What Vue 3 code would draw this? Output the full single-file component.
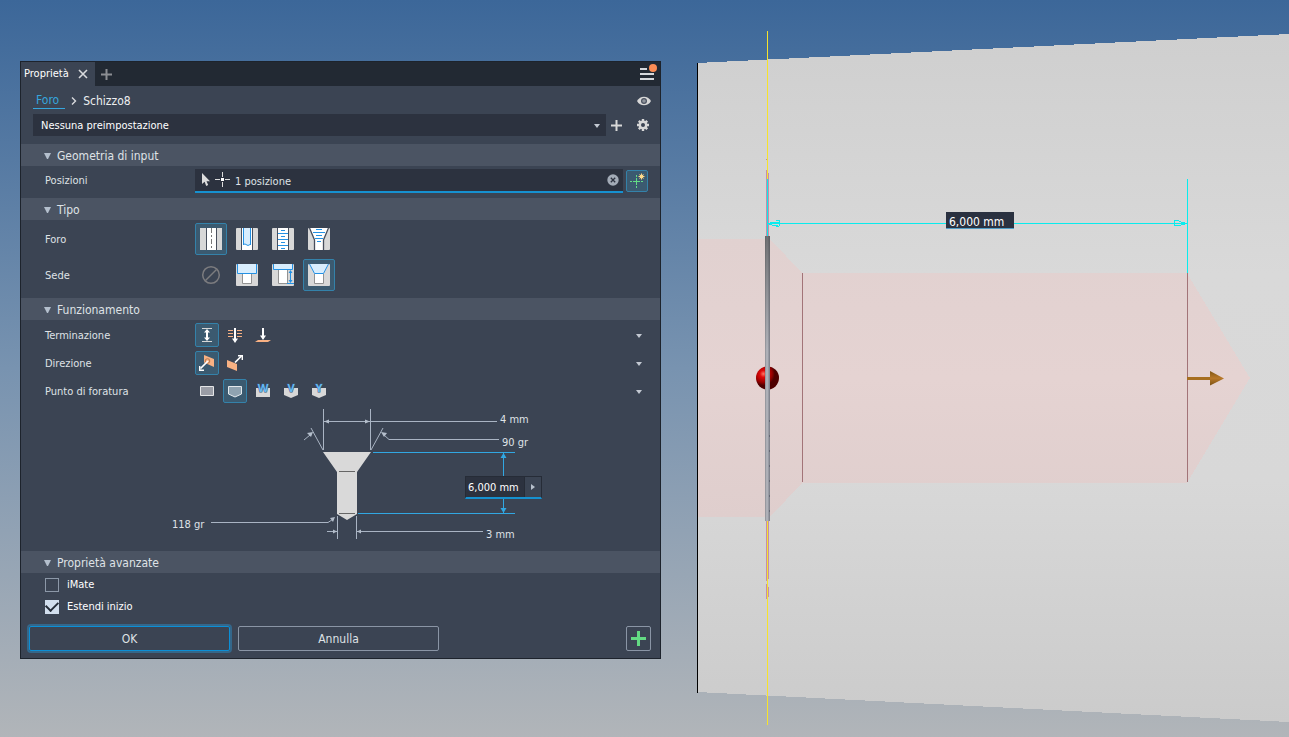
<script setup>
import { ref } from 'vue'

const holeTypes = ['simple', 'clearance', 'tapped', 'taper']
const seatTypes = ['none', 'counterbore', 'spotface', 'countersink']
const terminations = ['distance', 'through', 'to']
const directions = ['default', 'flipped']
const points = ['flat', 'angle', 'w', 'v', 'y']

const hole = ref('simple')
const seat = ref('countersink')
const termination = ref('distance')
const direction = ref('default')
const point = ref('angle')
const depth = ref('6,000 mm')
const positions = ref('1 posizione')
const imate = ref(false)
const extend = ref(true)
</script>

<template>
  <main class="page">
    <section class="panel">
      <header class="tabs">
        <div class="tab">
          <span>Proprietà</span>
          <button class="bare" aria-label="Chiudi">
            <svg width="10" height="10" viewBox="0 0 10 10"><path d="M1 1l8 8M9 1l-8 8" stroke="#d8dadd" stroke-width="1.600" /></svg>
          </button>
        </div>
        <button class="bare add-tab" aria-label="Aggiungi scheda">
          <svg width="11" height="11" viewBox="0 0 11 11"><path d="M5.500 0v11M0 5.500h11" stroke="#8b8e93" stroke-width="2" /></svg>
        </button>
        <button class="bare menu" aria-label="Menu">
          <svg width="18" height="18" viewBox="0 0 18 18">
            <path d="M1 5h7M1 10h14M1 15h14" stroke="#d5d8dc" stroke-width="2" />
            <circle cx="14" cy="4" r="4" fill="#fb8c55" />
          </svg>
        </button>
      </header>

      <nav class="crumbs">
        <a href="#foro">Foro</a>
        <svg width="6" height="8" viewBox="0 0 6 8"><path d="M1 .5l3.500 3.500L1 7.500" fill="none" stroke="#d8dadd" stroke-width="1.400" /></svg>
        <span>Schizzo8</span>
        <button class="bare eye" aria-label="Anteprima">
          <svg width="14" height="10" viewBox="0 0 14 10">
            <path d="M0 5C3 -.8 11 -.8 14 5 11 10.800 3 10.800 0 5z" fill="#d8d8d8" />
            <circle cx="7" cy="5" r="3" fill="#4b5260" /><circle cx="7" cy="5" r="1.800" fill="#8f949c" />
          </svg>
        </button>
      </nav>

      <div class="preset">
        <div class="select">
          <select aria-label="Preimpostazione"><option>Nessuna preimpostazione</option></select>
          <svg class="caret" width="6" height="4" viewBox="0 0 6 4"><path d="M0 0h6L3 4z" fill="#c3c9d2" /></svg>
        </div>
        <button class="bare" aria-label="Nuova preimpostazione">
          <svg width="11" height="11" viewBox="0 0 11 11"><path d="M5.500 0v11M0 5.500h11" stroke="#d8d8d8" stroke-width="2" /></svg>
        </button>
        <button class="bare gear" aria-label="Impostazioni">
          <svg width="12" height="12" viewBox="0 0 12 12">
            <path d="M6 0v12M0 6h12M1.800 1.800l8.400 8.400M10.200 1.800l-8.400 8.400" stroke="#d8d8d8" stroke-width="2.400" />
            <circle cx="6" cy="6" r="4.400" fill="#d8d8d8" /><circle cx="6" cy="6" r="2" fill="#3b4453" />
          </svg>
        </button>
      </div>

      <h2><i></i>Geometria di input</h2>
      <div class="row positions">
        <label for="positions">Posizioni</label>
        <div class="field">
          <svg width="32" height="16" viewBox="0 0 32 16">
            <path d="M3 1v11l2.600-2.300L7.200 14l2-1-1.700-3.700H11z" fill="#dcdcdc" />
            <path d="M16 7.500h5m5 0h5M23.500 0v5m0 5v5" stroke="#dcdcdc" shape-rendering="crispEdges" />
            <path d="M22 6h3v3h-3z" fill="#fff" />
          </svg>
          <input id="positions" v-model="positions" />
          <button class="bare" aria-label="Cancella selezione">
            <svg width="12" height="12" viewBox="0 0 12 12"><circle cx="6" cy="6" r="5.700" fill="#a3abb7" /><path d="M3.800 3.800l4.400 4.400M8.200 3.800L3.800 8.200" stroke="#2c323f" stroke-width="1.300" /></svg>
          </button>
        </div>
        <button class="tool small on sketch" aria-label="Centro schizzo">
          <svg width="18" height="18" viewBox="0 0 18 18">
            <path d="M2 9.500h2m1 0h7m1 0h2M8.500 3v2m0 1v7m0 1v2" stroke="#63dd86" shape-rendering="crispEdges" />
            <path d="M13.500 1.500v6M10.500 4.500h6M11.500 2.500l4 4M15.500 2.500l-4 4" stroke="#ffd27a" /><circle cx="13.500" cy="4.500" r="2" fill="#ffdc8d" />
          </svg>
        </button>
      </div>

      <h2><i></i>Tipo</h2>
      <div class="row big">
        <span>Foro</span>
        <div class="tools wide" role="group" aria-label="Foro">
          <button v-for="t in holeTypes" :key="t" class="tool" :class="{ on: hole === t }" :aria-label="t" @click="hole = t">
            <svg width="22" height="22" viewBox="0 0 22 22">
              <template v-if="t === 'simple'">
                <rect width="22" height="22" fill="#d8d8d8" /><path d="M6 0h10v22H6z" fill="#fff" />
                <path d="M6.500 0v22M16.500 0v22" stroke="#474e5c" /><path d="M11.500 0v22" stroke="#777" stroke-dasharray="5 2 2 2" />
              </template>
              <template v-else-if="t === 'clearance'">
                <rect width="22" height="22" rx="1" fill="#d8d8d8" /><path d="M6 0h10v22H6z" fill="#fff" />
                <path d="M5.500 0v22M16.500 0v22" stroke="#474e5c" />
                <path d="M7.500 0v17l2-1 2 1 2-.5 1.500.5V0" fill="#d8edfd" /><path d="M7.500 0v17M7 16.500l2-.5 3 1.500 2-1M14.500 0v17" fill="none" stroke="#2491e4" />
              </template>
              <template v-else-if="t === 'tapped'">
                <rect width="22" height="22" rx="1" fill="#d8d8d8" /><path d="M6 0h10v22H6z" fill="#fff" />
                <path d="M5.500 0v22M16.500 0v22" stroke="#474e5c" />
                <path d="M9 2.500h4M6 5.500h10M9 8.500h4M6 11.500h10M9 14.500h4M6 17.500h10M9 20.500h4" stroke="#2491e4" />
              </template>
              <template v-else>
                <rect width="22" height="22" rx="1" fill="#d8d8d8" /><path d="M1 0h20l-5 12v10H6V12z" fill="#fff" />
                <path d="M1.500 0L6.500 12v10M20.500 0l-5 12v10" fill="none" stroke="#474e5c" stroke-width="1.300" />
                <path d="M8 1.500h6M5 4.500h12M8 7.500h6M7 10.500h8M9 13.500h4" stroke="#2491e4" />
              </template>
            </svg>
          </button>
        </div>
      </div>
      <div class="row big seat">
        <span>Sede</span>
        <div class="tools wide" role="group" aria-label="Sede">
          <button v-for="t in seatTypes" :key="t" class="tool" :class="{ on: seat === t }" :aria-label="t" @click="seat = t">
            <svg width="22" height="22" viewBox="0 0 22 22">
              <template v-if="t === 'none'">
                <circle cx="11" cy="11" r="8.300" fill="none" stroke="#7c7c7f" stroke-width="1.500" /><path d="M5.500 16.500l11-11" stroke="#7c7c7f" stroke-width="1.500" />
              </template>
              <template v-else-if="t === 'counterbore'">
                <rect width="22" height="22" rx="1" fill="#d8d8d8" /><path d="M1.500 -1v10.500h19V-1" fill="#d8edfd" stroke="#2491e4" />
                <path d="M6.500 10v9.500h9V10" fill="#fff" stroke="#929292" />
              </template>
              <template v-else-if="t === 'spotface'">
                <rect width="22" height="22" rx="1" fill="#d8d8d8" /><path d="M1.500 -1v6.500h19V-1" fill="#d8edfd" stroke="#2491e4" />
                <path d="M6.500 6v13.500h9V6" fill="#fff" stroke="#929292" /><path d="M15 19.500h7M18.500 8v10" stroke="#2491e4" />
                <path d="M16.500 9l2-3 2 3zM16.500 16l2 3 2-3z" fill="#2491e4" />
              </template>
              <template v-else>
                <rect width="22" height="22" rx="1" fill="#d8d8d8" /><path d="M1 -1l5.500 10.500h9L21 -1" fill="#d8edfd" stroke="#2491e4" />
                <path d="M6.500 10v9.500h9V10" fill="#fff" stroke="#929292" />
              </template>
            </svg>
          </button>
        </div>
      </div>

      <h2><i></i>Funzionamento</h2>
      <div class="row">
        <span>Terminazione</span>
        <div class="tools" role="group" aria-label="Terminazione">
          <button v-for="t in terminations" :key="t" class="tool small" :class="{ on: termination === t }" :aria-label="t" @click="termination = t">
            <svg width="16" height="16" viewBox="0 0 16 16">
              <template v-if="t === 'distance'">
                <path d="M3 1.500h10M3 14.500h10" stroke="#d8d8d8" /><path d="M8 3v10" stroke="#fff" stroke-width="2" />
                <path d="M5 5.500L8 2l3 3.500zM5 10.500L8 14l3-3.500z" fill="#fff" />
              </template>
              <template v-else-if="t === 'through'">
                <path d="M1 3.500h5M1 6.500h5M1 9.500h5M10 3.500h5M10 6.500h5M10 9.500h5" stroke="#f8b183" />
                <path d="M8 1v12" stroke="#fff" stroke-width="2" /><path d="M5 11.500h6L8 16z" fill="#fff" />
              </template>
              <template v-else>
                <path d="M3 13h13l-3 2H0z" fill="#f8b183" /><path d="M8 1v9" stroke="#fff" stroke-width="2" /><path d="M5 8.500h6L8 13z" fill="#fff" />
              </template>
            </svg>
          </button>
        </div>
        <button class="bare more" aria-label="Altre opzioni di terminazione"><svg width="6" height="4" viewBox="0 0 6 4"><path d="M0 0h6L3 4z" fill="#c3c9d2" /></svg></button>
      </div>
      <div class="row">
        <span>Direzione</span>
        <div class="tools" role="group" aria-label="Direzione">
          <button v-for="t in directions" :key="t" class="tool small" :class="{ on: direction === t }" :aria-label="t" @click="direction = t">
            <svg width="16" height="16" viewBox="0 0 16 16">
              <template v-if="t === 'default'">
                <path d="M5 0l10 4v8L5 7.500z" fill="#f8b183" /><circle cx="8.500" cy="6" r="2.300" fill="none" stroke="#b7794f" />
                <path d="M9 6l-7.500 7.500" stroke="#fff" stroke-width="1.700" /><path d="M.7 11v4.300h4.300" fill="none" stroke="#fff" stroke-width="1.400" />
              </template>
              <template v-else>
                <path d="M0 5l10 4v7L0 12z" fill="#f8b183" /><path d="M8 7.500L14.500 1" stroke="#fff" stroke-width="1.700" /><path d="M11 .7h4.300V5" fill="none" stroke="#fff" stroke-width="1.400" />
              </template>
            </svg>
          </button>
        </div>
        <button class="bare more" aria-label="Altre opzioni di direzione"><svg width="6" height="4" viewBox="0 0 6 4"><path d="M0 0h6L3 4z" fill="#c3c9d2" /></svg></button>
      </div>
      <div class="row">
        <span>Punto di foratura</span>
        <div class="tools" role="group" aria-label="Punto di foratura">
          <button v-for="t in points" :key="t" class="tool small" :class="{ on: point === t }" :aria-label="t" @click="point = t">
            <svg width="16" height="20" viewBox="0 -2 16 20">
              <path v-if="t === 'flat'" d="M1.500 3.500v9h13v-9z" fill="#9a9da6" stroke="#e4e5e7" />
              <path v-else-if="t === 'angle'" d="M1.500 3.500v7.500L8 14l6.500-3V3.500z" fill="#8fa3b1" stroke="#e4e9ed" />
              <template v-else>
                <path :d="t === 'w' ? 'M1 5h14v9H1z' : 'M1 5h14v7l-7 3-7-3z'" fill="#d8d8d8" />
                <text x="8" y="9" text-anchor="middle" class="letter">{{ t.toUpperCase() }}</text>
              </template>
            </svg>
          </button>
        </div>
        <button class="bare more" aria-label="Altre opzioni della punta"><svg width="6" height="4" viewBox="0 0 6 4"><path d="M0 0h6L3 4z" fill="#c3c9d2" /></svg></button>
      </div>

      <div class="diagram">
        <svg width="400" height="147" viewBox="0 4 400 147">
          <g stroke="#a9b4c3" fill="none">
            <path d="M163.500 9v41M210.500 9v41M164 21.500h173M151 28l12 22M223 28l-12 22" />
            <path d="M144 40l6-5M224 35l5 4.500h110M51 122.500h117l6-4M177.500 116v23M196.500 116v23M167 131.500h10M197 131.500h126" />
          </g>
          <path d="M164 21.500l5-2v4zM210 21.500l-5-2v4zM153 32l-2 5-4-4zM221 32l6 1-3 4zM175 117l-2 5-3-4zM177 131.500l-4-2v4zM197 131.500l4-2v4z" fill="#b4becb" />
          <path d="M163 52h48l-14 20v42l-10 6-10-6V72z" fill="#d9d9d9" />
          <path d="M179 71.500h16M179 113.500h16" stroke="#666" />
          <path d="M213 52.500h142M198 113.500h157M343.500 53v60" stroke="#31a7e2" />
          <path d="M343.500 53l-3 5h6zM343.500 113l-3-5h6z" fill="#31a7e2" />
          <g class="label"><text x="340" y="23">4 mm</text><text x="342" y="46">90 gr</text><text x="12" y="128">118 gr</text><text x="326" y="138">3 mm</text></g>
        </svg>
        <div class="depth">
          <input v-model="depth" aria-label="Profondità foro" />
          <button class="bare" aria-label="Opzioni valore"><svg width="4" height="6" viewBox="0 0 4 6"><path d="M0 0v6l4-3z" fill="#b7c0cc" /></svg></button>
        </div>
      </div>

      <h2><i></i>Proprietà avanzate</h2>
      <div class="checks">
        <label><input v-model="imate" type="checkbox" />iMate</label>
        <label><input v-model="extend" type="checkbox" />Estendi inizio</label>
      </div>

      <footer>
        <button class="action primary">OK</button>
        <button class="action">Annulla</button>
        <button class="action apply" aria-label="Applica e crea nuovo foro">
          <svg width="15" height="15" viewBox="0 0 15 15"><path d="M7.500 0v15M0 7.500h15" stroke="#63da83" stroke-width="3" /></svg>
        </button>
      </footer>
    </section>

    <svg class="scene" viewBox="697 0 592 737" preserveAspectRatio="xMinYMin slice" role="img" aria-label="Anteprima del foro">
      <defs>
        <linearGradient id="metal" x2="0" y2="1"><stop offset="0" stop-color="#cfcfcf" /><stop offset=".35" stop-color="#d9d9d9" /><stop offset=".65" stop-color="#d8d8d8" /><stop offset="1" stop-color="#cbcbcb" /></linearGradient>
        <linearGradient id="cut" x2="0" y2="1"><stop offset="0" stop-color="#e1d1d0" /><stop offset=".5" stop-color="#e5d3d2" /><stop offset="1" stop-color="#dfcecd" /></linearGradient>
        <linearGradient id="rod" x2="1" y2="0"><stop offset="0" stop-color="#8c8d93" /><stop offset=".4" stop-color="#b9bbc2" /><stop offset="1" stop-color="#777a84" /></linearGradient>
        <linearGradient id="rodShade" x2="0" y2="1"><stop offset="0" stop-color="#444" stop-opacity=".6" /><stop offset=".4" stop-color="#555" stop-opacity="0" /></linearGradient>
        <radialGradient id="ball" cx=".32" cy=".32"><stop offset="0" stop-color="#ff7565" /><stop offset=".3" stop-color="#df0909" /><stop offset=".75" stop-color="#970000" /><stop offset="1" stop-color="#4e0000" /></radialGradient>
        <linearGradient id="gold" x2="0" y2="1"><stop offset="0" stop-color="#805716" /><stop offset=".5" stop-color="#b8792a" /><stop offset="1" stop-color="#7c5213" /></linearGradient>
      </defs>
      <g shape-rendering="crispEdges">
        <path d="M697 63L1289 34V722L697 692z" fill="url(#metal)" />
        <path d="M697.500 63v630" stroke="#000" />
        <path d="M698 239h72l32 34h385l63 105-63 105H802l-32 34h-72z" fill="url(#cut)" />
        <path d="M802.500 273v209M1187.500 273v209" stroke="#a27478" />
        <path d="M766.500 170v66M768.500 173v63M766.500 521v60M768.500 521v58M766.500 584v15M768.500 587v10" stroke="#c48fa9" />
        <path d="M766.500 159v1" stroke="#b98f9f" />
        <path d="M767.500 31v148M767.500 520v205" stroke="#f7e32b" />
        <path d="M767.500 179v58M767.500 223.500h420M1187.500 179v94" stroke="#08ecee" />
        <path d="M779.500 221v5M776 220.500h4M776 226.500h3M768 223.500l5-1h6M768 223.500l5 2h5M1174.500 220v6M1175 220.500h4M1175 225.500h4M1187 223.500l-8-2M1187 223.500l-8 2" stroke="#08ecee" fill="none" />
      </g>
      <circle cx="767.500" cy="378" r="11.500" fill="url(#ball)" />
      <rect x="765" y="236" width="5" height="285" fill="url(#rod)" />
      <rect x="765" y="236" width="5" height="285" fill="url(#rodShade)" />
      <path d="M769.500 420v100" stroke="#646874" stroke-dasharray="2 13" />
      <path d="M1187 378.500h24" stroke="#a66e20" stroke-width="3" />
      <path d="M1210 371l14 7.500-14 7z" fill="url(#gold)" />
      <rect x="946" y="212" width="68" height="17" fill="#2a3140" /><path d="M946 228.500h68" stroke="#4f9cc5" />
      <text x="949" y="226" class="dimension">6,000 mm</text>
    </svg>
  </main>
</template>

<style>
body { margin: 0; }
</style>

<style scoped>
* { box-sizing: border-box; }
.page {
  min-height: 100vh;
  padding-left: 20px;
  display: grid;
  grid-template-columns: minmax(0, 641fr) minmax(0, 592fr);
  gap: 36px;
  position: relative;
  background: linear-gradient(#3c6799, #7893b0 50%, #b1b5b9);
  font: 11px/16px "DejaVu Sans Condensed", "Noto Sans", sans-serif;
  color: #dfe2e6;
}
.panel {
  align-self: start;
  margin-top: 61px;
  background: #3b4453;
  border: 1px solid #1d232c;
}
button, input, select { font: inherit; color: inherit; }
svg { display: block; flex: none; }
.bare { padding: 0; border: 0; background: none; display: grid; place-items: center; }
.tabs { height: 24px; display: flex; background: #222933; }
.tab { width: 74px; padding: 0 7px 0 3px; display: flex; align-items: center; justify-content: space-between; background: #3b4453; color: #fff; }
.add-tab { margin-left: 6px; }
.menu { margin-left: auto; padding: 0 3px 2px 0; }
.crumbs { height: 28px; padding: 1px 9px 0 12px; display: flex; align-items: center; color: #eceef0; font-size: 12px; }
.crumbs a { padding: 0 6px 0 3px; margin-right: 6px; color: #36a6dd; text-decoration: none; border-bottom: 1px solid #36a6dd; }
.crumbs span { margin-left: 6px; }
.eye { margin-left: auto; }
.preset { padding: 0 11px 0 12px; display: flex; align-items: center; gap: 5px; }
.select { flex: 1; position: relative; }
.select select { display: block; width: 100%; height: 22px; padding: 1px 8px 0; border: 0; appearance: none; background: #2c323f; color: #fff; }
.caret { position: absolute; right: 6px; top: 10px; }
.gear { margin-left: 10px; }
h2 { height: 22px; margin: 8px 0 3px; padding: 2px 0 0 23px; display: flex; align-items: center; gap: 6px; background: #4b5463; font-size: 12px; font-weight: 400; }
h2 i { border: solid transparent; border-width: 6px 3px 0; border-top-color: #b4bfcd; width: 7px; }
.row { padding: 0 12px 0 24px; margin-bottom: 4px; display: grid; grid-template-columns: 150px minmax(0, 1fr) auto; align-items: center; min-height: 24px; }
.row > span { padding-top: 2px; }
.row:has(+ h2) { margin-bottom: 0; }
.row:has(+ .diagram) { margin-bottom: 1px; }
.positions + h2 { margin-top: 5px; }
.seat + h2 { margin-top: 7px; }
.field { height: 24px; display: flex; align-items: center; padding: 0 4px; gap: 4px; background: #2c323f; border-bottom: 2px solid #1691d0; }
.field input { flex: 1; min-width: 0; height: 22px; padding: 2px 0 0; border: 0; background: none; outline: none; }
.tools { display: flex; gap: 4px; }
.tool { width: 32px; height: 32px; padding: 0; display: grid; place-items: center; border: 1px solid transparent; border-radius: 2px; background: none; }
.small { width: 24px; height: 24px; }
.sketch { width: 22px; height: 22px; margin-left: 3px; }
.on { background: #3b5a70; border-color: #3482aa; }
.more { width: 18px; height: 20px; padding-top: 2px; }
.letter { font: bold 11px/12px "Noto Sans", sans-serif; fill: #65b9f4; stroke: #3b5a78; stroke-width: 1px; paint-order: stroke; }
.tools svg { overflow: visible; }
.tool:not(.small) svg { overflow: hidden; }
.diagram { position: relative; width: 400px; height: 144px; margin-left: 139px; }
.label { fill: #dfe2e6; }
.depth { position: absolute; left: 305px; top: 72px; width: 77px; height: 23px; display: flex; background: #2c323f; border: 1px solid #262c37; border-bottom: 2px solid #1691d0; color: #fff; }
.depth input { flex: 1; min-width: 0; padding: 2px 0 0 2px; border: 0; background: none; outline: none; }
.depth button { width: 17px; background: #3b4453; border-left: 1px solid #262c37; }
.diagram + h2 { margin-top: 3px; margin-bottom: 4px; }
.checks { padding: 0 24px; display: grid; gap: 6px; color: #fff; justify-items: start; }
.checks label { display: flex; align-items: center; gap: 8px; }
.checks input { appearance: none; width: 14px; height: 14px; margin: 0; border: 1px solid #8c98a8; display: grid; place-items: center; }
.checks input:checked { background: #d2dfee; border-color: #d2dfee; }
.checks input:checked::after { content: ""; width: 10px; height: 6px; margin-bottom: 4px; border: solid #242c38; border-width: 0 0 2px 2px; transform: rotate(-45deg); }
footer { padding: 11px 9px 7px 8px; display: flex; gap: 8px; }
.action { height: 25px; flex: 0 1 201px; padding: 0; display: grid; place-items: center; border: 1px solid #8a95a5; border-radius: 2px; background: none; font-size: 12px; }
.primary { border-color: #0b8fd6; box-shadow: 0 0 0 2px #34678a; }
.apply { flex: 0 0 25px; margin-left: auto; }
.scene { position: absolute; left: calc((100% - 56px) * 641 / 1233 + 56px); top: 0; width: calc((100% - 56px) * 592 / 1233); height: 100%; }
.dimension { font-size: 12px; fill: #fff; }
</style>
